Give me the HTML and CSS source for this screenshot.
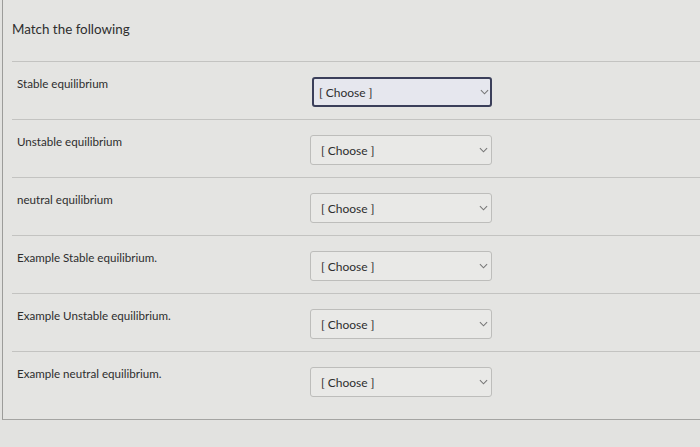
FILE: index.html
```html
<!DOCTYPE html>
<html>
<head>
<meta charset="utf-8">
<link rel="stylesheet" href="styles.css">
</head>
<body>
<div class="panel">
  <div class="header">Match the following</div>
  <div class="rows">
    <div class="row">
      <div class="label">Stable equilibrium</div>
      <div class="select focused"><span>[ Choose ]</span><svg class="chev" viewBox="0 0 10 6" width="9" height="6"><path d="M1 1 L5 5 L9 1" fill="none" stroke="currentColor" stroke-width="1.2"/></svg></div>
    </div>
    <div class="row">
      <div class="label">Unstable equilibrium</div>
      <div class="select"><span>[ Choose ]</span><svg class="chev" viewBox="0 0 10 6" width="9" height="6"><path d="M1 1 L5 5 L9 1" fill="none" stroke="currentColor" stroke-width="1.2"/></svg></div>
    </div>
    <div class="row">
      <div class="label">neutral equilibrium</div>
      <div class="select"><span>[ Choose ]</span><svg class="chev" viewBox="0 0 10 6" width="9" height="6"><path d="M1 1 L5 5 L9 1" fill="none" stroke="currentColor" stroke-width="1.2"/></svg></div>
    </div>
    <div class="row">
      <div class="label">Example Stable equilibrium.</div>
      <div class="select"><span>[ Choose ]</span><svg class="chev" viewBox="0 0 10 6" width="9" height="6"><path d="M1 1 L5 5 L9 1" fill="none" stroke="currentColor" stroke-width="1.2"/></svg></div>
    </div>
    <div class="row">
      <div class="label">Example Unstable equilibrium.</div>
      <div class="select"><span>[ Choose ]</span><svg class="chev" viewBox="0 0 10 6" width="9" height="6"><path d="M1 1 L5 5 L9 1" fill="none" stroke="currentColor" stroke-width="1.2"/></svg></div>
    </div>
    <div class="row last">
      <div class="label">Example neutral equilibrium.</div>
      <div class="select"><span>[ Choose ]</span><svg class="chev" viewBox="0 0 10 6" width="9" height="6"><path d="M1 1 L5 5 L9 1" fill="none" stroke="currentColor" stroke-width="1.2"/></svg></div>
    </div>
  </div>
</div>
</body>
</html>
```
FILE: styles.css
```css
html, body {
  margin: 0;
  padding: 0;
}
body {
  background: #e2e2e0;
  font-family: Lato, "Open Sans", sans-serif;
  color: #2e2e2e;
  width: 700px;
  height: 447px;
  overflow: hidden;
}
.panel {
  margin-left: 2px;
  height: 419px;
  background: #e4e4e2;
  border-left: 1px solid #9c9c9a;
  border-bottom: 1px solid #a4a4a2;
  display: flex;
  flex-direction: column;
}
.header {
  height: 61px;
  box-sizing: border-box;
  padding: 21px 0 0 9px;
  font-size: 13.4px;
  color: #2e2e2e;
}
.rows {
  margin-left: 9px;
  display: flex;
  flex-direction: column;
  flex: 1;
}
.row {
  display: flex;
  align-items: flex-start;
  height: 58px;
  box-sizing: border-box;
  border-top: 1px solid #c3c3c1;
  padding-top: 15px;
}
.row.last {
  flex: 1;
}
.label {
  width: 293px;
  padding-left: 5px;
  font-size: 11.6px;
  color: #2e2e2e;
}
.select {
  width: 182px;
  height: 30px;
  box-sizing: border-box;
  border: 1px solid #bdbdbb;
  border-radius: 3px;
  background: #e9e9e7;
  display: flex;
  align-items: center;
  justify-content: space-between;
  padding: 0 3px 0 10px;
  font-size: 12px;
  color: #2e2e2e;
}
.select.focused {
  margin-left: 2px;
  width: 180px;
  border: 2px solid #3b3f5a;
  background: #e6e7ee;
  padding-left: 5px;
  padding-right: 1px;
}
.chev {
  color: #777;
}
```
